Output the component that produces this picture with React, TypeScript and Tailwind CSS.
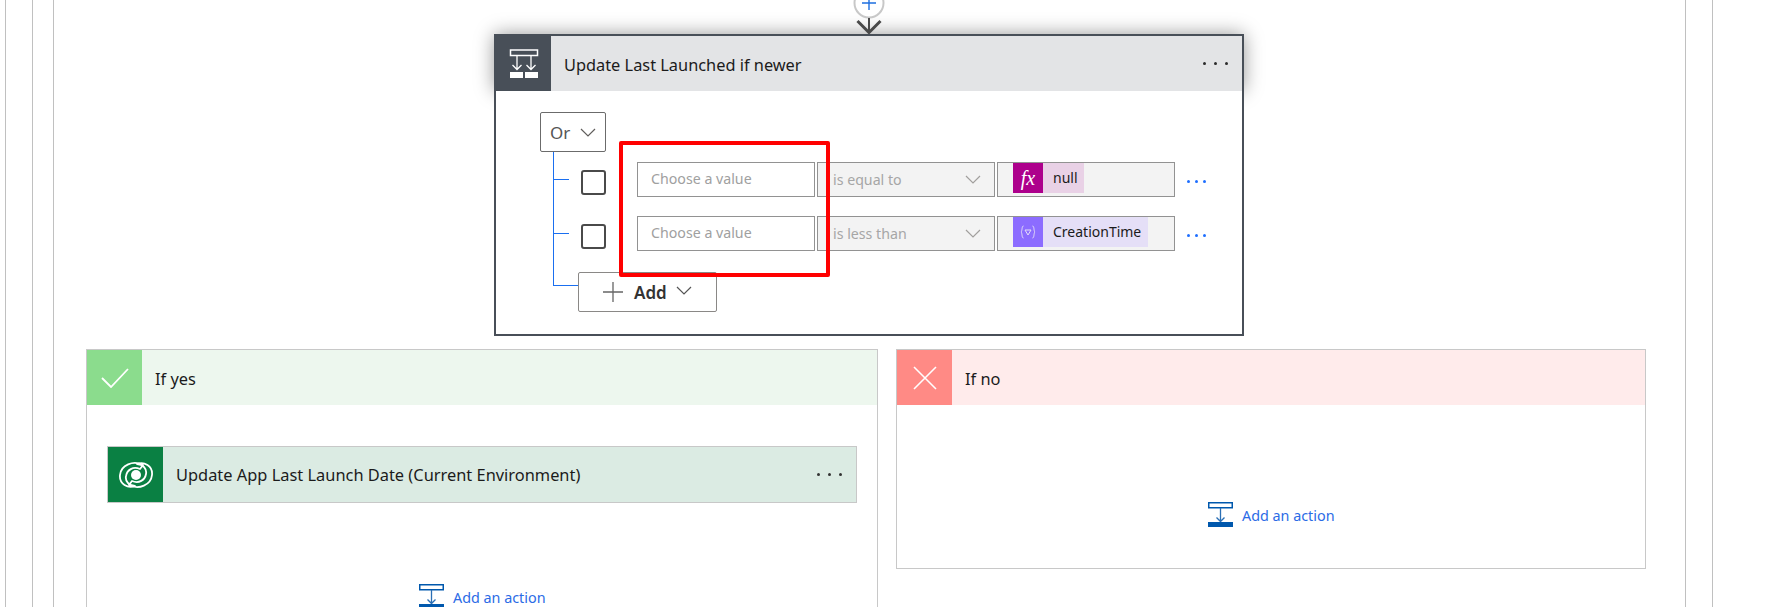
const Chevron = ({ color = "#a19f9d" }: { color?: string }) => (
  <svg width="16" height="9" viewBox="0 0 16 9" className="flex-none">
    <path d="M1 1 L8 8 L15 1" fill="none" stroke={color} strokeWidth="1.2" />
  </svg>
);

const Dots = ({ color, gap, size }: { color: string; gap: string; size: string }) => (
  <div className={`flex ${gap}`}>
    <span className={`${size} rounded-full`} style={{ backgroundColor: color }} />
    <span className={`${size} rounded-full`} style={{ backgroundColor: color }} />
    <span className={`${size} rounded-full`} style={{ backgroundColor: color }} />
  </div>
);

const ConditionIcon = () => (
  <svg width="30" height="29" viewBox="0 0 30 29" fill="none">
    <rect x="1.5" y="1" width="27" height="5.5" stroke="white" strokeWidth="1.5" />
    <path d="M8 6.5 V21 M22 6.5 V21 M3.5 16 L8 20.5 L12.5 16 M17.5 16 L22 20.5 L26.5 16" stroke="white" strokeWidth="1.3" />
    <rect x="1" y="23" width="13" height="6" fill="white" />
    <rect x="16" y="23" width="13" height="6" fill="white" />
  </svg>
);

const AddActionIcon = () => (
  <svg width="25" height="25" viewBox="0 0 25 25" fill="none" className="flex-none">
    <rect x="0.75" y="0.75" width="23.5" height="5" stroke="#0058ad" strokeWidth="1.5" />
    <path d="M12.5 6 V19 M8.5 15.5 L12.5 19.5 L16.5 15.5" stroke="#2a6fb5" strokeWidth="1.3" />
    <rect x="0" y="20" width="25" height="5" fill="#0058ad" />
  </svg>
);

const Row = ({
  operator,
  token,
  tokenBg,
  iconBg,
  tokenWidth,
  icon,
}: {
  operator: string;
  token: string;
  tokenBg: string;
  iconBg: string;
  tokenWidth: string;
  icon: React.ReactNode;
}) => (
  <div className="flex items-center h-[35px]">
    <div className="w-[15px] h-[1px] bg-[#1a6ff0] flex-none" />
    <div className="ml-[12px] mt-[6px] w-[25px] h-[25px] rounded-[3px] border-2 border-[#4a4a4a] flex-none" />
    <div className="ml-[31px] w-[178px] h-[35px] border border-[#929292] flex items-center pl-[13px] pb-[2px] text-[14.2px] text-[#a0a0a0] flex-none">
      Choose a value
    </div>
    <div className="ml-[2px] w-[178px] h-[35px] border border-[#929292] bg-[#f3f3f3] flex items-center justify-between pl-[15px] pr-[13px] text-[14.2px] text-[#a6a6a6] flex-none">
      <span>{operator}</span>
      <Chevron />
    </div>
    <div className="ml-[2px] w-[178px] h-[35px] border border-[#929292] bg-[#f3f3f3] flex items-start pl-[15px] flex-none">
      <div className={`${tokenWidth} h-[30px] flex text-[14px] text-[#1b1b1b]`} style={{ backgroundColor: tokenBg }}>
        <div className="w-[30px] h-[30px] flex items-center justify-center flex-none" style={{ backgroundColor: iconBg }}>
          {icon}
        </div>
        <span className="ml-[10px] leading-[30px]">{token}</span>
      </div>
    </div>
    <div className="ml-[12px] mt-[4px]">
      <Dots color="#1e6fff" gap="gap-[5px]" size="w-[3px] h-[3px]" />
    </div>
  </div>
);

export default function App() {
  return (
    <div className="w-[1781px] h-[607px] overflow-hidden bg-white font-['Noto_Sans',sans-serif] text-[#1b1b1b]">
      <div className="ml-[5px] h-[607px] border-l border-[#c0c0c0] pl-[26px]">
        <div className="w-[1681px] h-[607px] border-x border-[#c0c0c0] pl-[20px]">
          <div className="w-[1633px] h-[607px] border-x border-[#c0c0c0]">
            {/* connector */}
            <div className="h-[34px] pl-[798px]">
              <svg width="34" height="34" viewBox="0 0 34 34" fill="none" className="relative z-10">
                <circle cx="17" cy="3" r="14.5" stroke="#c8c8c8" strokeWidth="2" fill="white" />
                <path d="M17 -4 V10 M10 3 H24" stroke="#1e6fe0" strokeWidth="1.4" />
                <path d="M17 18 V33" stroke="#4a4a4a" strokeWidth="2" />
                <path d="M5.5 21 L17 32.5 L28.5 21" stroke="#4a4a4a" strokeWidth="3" />
              </svg>
            </div>

            {/* condition card */}
            <div className="w-[750px] ml-[440px] relative">
              <div className="relative h-[57px] bg-[#e3e4e6] border-t-2 border-x-2 border-[#484f58] flex items-center shadow-[0_0_18px_rgba(0,0,0,0.4)]">
                <div className="w-[55px] h-[55px] bg-[#484f58] flex items-center justify-center flex-none">
                  <ConditionIcon />
                </div>
                <span className="ml-[13px] mt-[2px] text-[16.35px] leading-[22px] flex-1">Update Last Launched if newer</span>
                <div className="mr-[14px]">
                  <Dots color="#2b2b2b" gap="gap-[8px]" size="w-[3px] h-[3px]" />
                </div>
              </div>
              <div className="relative h-[245px] bg-white border-x-2 border-b-2 border-[#484f58] pt-[21px]">
                <div className="ml-[44px] w-[66px] h-[40px] rounded-[2px] border border-[#6b6b6b] flex items-center justify-between pl-[9px] pr-[9px] pt-[1px] text-[17px] text-[#555]">
                  <span>Or</span>
                  <Chevron color="#605e5c" />
                </div>
                <div className="ml-[57px] h-[134px] border-l border-[#1a6ff0] pt-[10px] flex flex-col gap-[19px]">
                  <Row
                    operator="is equal to"
                    token="null"
                    tokenBg="#e9d1e6"
                    iconBg="#ad008c"
                    tokenWidth="w-[71px]"
                    icon={<span className="font-['Liberation_Serif',serif] italic text-[20px] text-white leading-none">fx</span>}
                  />
                  <Row
                    operator="is less than"
                    token="CreationTime"
                    tokenBg="#e5dff7"
                    iconBg="#8c6cff"
                    tokenWidth="w-[135px]"
                    icon={
                      <svg width="16" height="14" viewBox="0 0 16 14" fill="none" stroke="#e5dff7" strokeWidth="1">
                        <path d="M3.5 1 C1.5 1 2.5 6 1 7 C2.5 8 1.5 13 3.5 13 M12.5 1 C14.5 1 13.5 6 15 7 C13.5 8 14.5 13 12.5 13" />
                        <path d="M5 5 H11 L8 10 Z" />
                      </svg>
                    }
                  />
                  <div className="flex items-start mt-[2px]">
                    <div className="w-[24px] h-[1px] bg-[#1a6ff0] mt-[13px] flex-none" />
                    <div className="w-[139px] h-[40px] rounded-[2px] border border-[#8a8886] bg-white flex items-center pl-[24px] flex-none">
                      <svg width="20" height="20" viewBox="0 0 20 20" fill="none" className="flex-none">
                        <path d="M10 0 V20 M0 10 H20" stroke="#666" strokeWidth="1.3" />
                      </svg>
                      <span className="ml-[11px] mt-[2px] text-[17px] font-semibold text-[#333]">Add</span>
                      <span className="ml-[9px] mb-[4px]">
                        <Chevron color="#555" />
                      </span>
                    </div>
                  </div>
                </div>
                <div className="absolute left-[123px] top-[50px] w-[211px] h-[136px] border-4 border-[#ff0000] rounded-[2px]" />
              </div>
            </div>

            {/* branches */}
            <div className="mt-[13px] ml-[32px] flex items-start gap-[18px]">
              <div className="w-[792px] h-[300px] border border-[#c8c8c8] border-b-0 flex-none">
                <div className="h-[55px] bg-[#edf7ee] flex items-center">
                  <div className="w-[55px] h-[55px] bg-[#8bdc8d] flex items-center justify-center flex-none">
                    <svg width="28" height="20" viewBox="0 0 28 20" fill="none">
                      <path d="M1 10 L10 19 L27 1" stroke="white" strokeWidth="1.8" />
                    </svg>
                  </div>
                  <span className="ml-[13px] mt-[3px] text-[16.35px]">If yes</span>
                </div>
                <div className="ml-[20px] mt-[41px] w-[750px] h-[57px] border border-[#c8c8c8] bg-[#dbebe3] flex items-center">
                  <div className="w-[55px] h-[55px] bg-[#0a8043] flex items-center justify-center flex-none">
                    <svg width="36" height="28" viewBox="0 0 36 28" fill="none" stroke="white" strokeWidth="1.8" strokeLinejoin="round">
                      <path d="M25 4 C15 -1 3 4 2 14 C1 23 10 28 17 25 C11 25 7 20 8 15 C9 9 15 5 22 8 Z" />
                      <path transform="rotate(180 18 14)" d="M25 4 C15 -1 3 4 2 14 C1 23 10 28 17 25 C11 25 7 20 8 15 C9 9 15 5 22 8 Z" />
                      <circle cx="18" cy="14" r="5" fill="white" stroke="none" />
                    </svg>
                  </div>
                  <span className="ml-[13px] mt-[2px] text-[16.4px] flex-1">Update App Last Launch Date (Current Environment)</span>
                  <div className="mr-[14px]">
                    <Dots color="#333" gap="gap-[8px]" size="w-[3px] h-[3px]" />
                  </div>
                </div>
                <div className="mt-[81px] ml-[332px] flex items-start gap-[9px] text-[14.35px] text-[#2b6be6]">
                  <AddActionIcon />
                  <span className="leading-[22px] mt-[3px]">Add an action</span>
                </div>
              </div>
              <div className="w-[750px] h-[220px] border border-[#c8c8c8] flex-none">
                <div className="h-[55px] bg-[#ffebeb] flex items-center">
                  <div className="w-[55px] h-[55px] bg-[#ff8a85] flex items-center justify-center flex-none">
                    <svg width="24" height="24" viewBox="0 0 24 24" fill="none">
                      <path d="M1 1 L23 23 M23 1 L1 23" stroke="white" strokeWidth="1.6" />
                    </svg>
                  </div>
                  <span className="ml-[13px] mt-[3px] text-[16.35px]">If no</span>
                </div>
                <div className="mt-[97px] ml-[311px] flex items-start gap-[9px] text-[14.35px] text-[#2b6be6]">
                  <AddActionIcon />
                  <span className="leading-[22px] mt-[3px]">Add an action</span>
                </div>
              </div>
            </div>
          </div>
        </div>
      </div>
    </div>
  );
}
